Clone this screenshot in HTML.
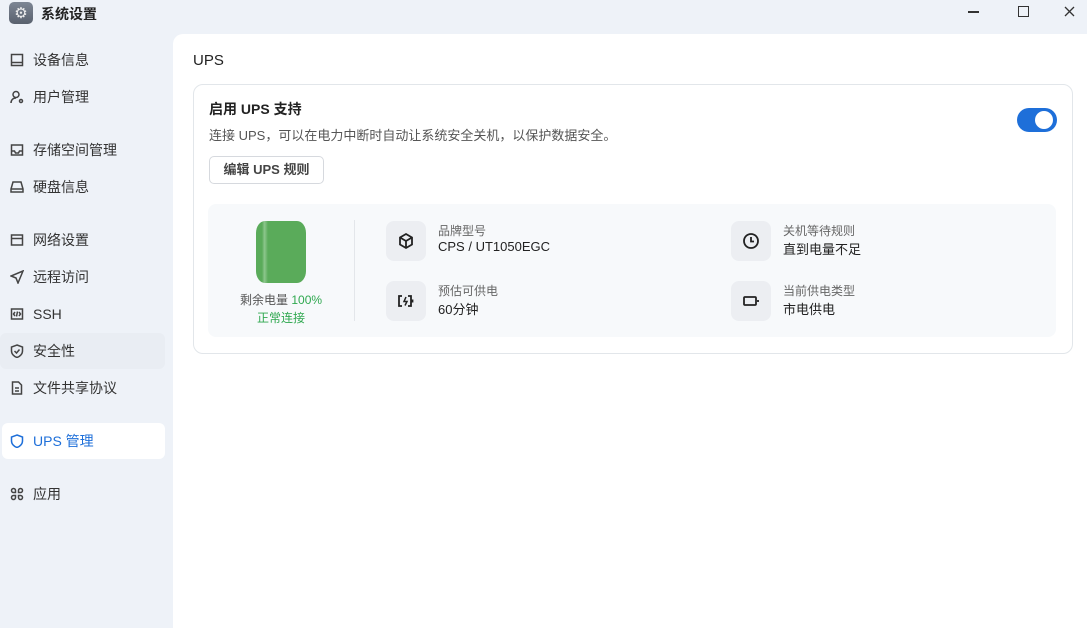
<!DOCTYPE html><html><head><meta charset="utf-8"><style>
*{margin:0;padding:0;box-sizing:border-box}
body{width:1087px;height:628px;overflow:hidden;background:#eef2f8;font-family:"Liberation Sans","Noto Sans CJK SC",sans-serif;position:relative;color:#222}
.a{position:absolute}
.nav{position:absolute;left:10px;font-size:14px;color:#333;display:flex;align-items:center;gap:9px;height:20px}
.nav svg{width:14px;height:14px;fill:none;stroke:#444;stroke-width:1.5}
.ib{position:absolute;width:40px;height:40px;border-radius:8px;background:#eceef2;display:flex;align-items:center;justify-content:center}
.ib svg{width:18px;height:18px;fill:none;stroke:#222;stroke-width:1.8}
.lb{position:absolute;font-size:12px;color:#666}
.vl{position:absolute;font-size:13px;color:#222}
</style></head><body>
<div class="a" style="left:9px;top:2px;width:24px;height:22px;border-radius:5px;background:linear-gradient(#7d8694,#59616e);display:flex;align-items:center;justify-content:center;color:#eee;font-size:15px">⚙</div>
<div class="a" style="left:41px;top:4px;font-size:14px;font-weight:bold;color:#222">系统设置</div>
<div class="a" style="left:968px;top:11px;width:11px;height:1.5px;background:#333"></div>
<div class="a" style="left:1018px;top:6px;width:11px;height:11px;border:1.5px solid #333"></div>
<svg class="a" style="left:1064px;top:6px" width="11" height="11" viewBox="0 0 11 11"><path d="M1 1l9 9M10 1l-9 9" stroke="#333" stroke-width="1.3"/></svg>

<div class="a" style="left:0;top:333px;width:165px;height:36px;background:#e9edf3;border-radius:6px"></div>
<div class="a" style="left:2px;top:423px;width:163px;height:36px;background:#fff;border-radius:6px"></div>

<div class="nav" style="top:50px"><svg viewBox="0 0 14 14"><rect x="1.5" y="1.5" width="11" height="11"/><path d="M1.5 9.5h11"/></svg>设备信息</div>
<div class="nav" style="top:87px"><svg viewBox="0 0 14 14"><circle cx="6" cy="4.5" r="3"/><path d="M1 13c0-3 2-5 5-5"/><circle cx="11" cy="11" r="1.5"/></svg>用户管理</div>
<div class="nav" style="top:140px"><svg viewBox="0 0 14 14"><rect x="1.5" y="2" width="11" height="10"/><path d="M1.5 8h3l1 2h3l1-2h3"/></svg>存储空间管理</div>
<div class="nav" style="top:177px"><svg viewBox="0 0 14 14"><path d="M3 2h8l2 7v3H1V9z"/><path d="M1 9h12"/></svg>硬盘信息</div>
<div class="nav" style="top:230px"><svg viewBox="0 0 14 14"><rect x="1.5" y="2" width="11" height="10"/><path d="M1.5 5.5h11"/></svg>网络设置</div>
<div class="nav" style="top:267px"><svg viewBox="0 0 14 14"><path d="M13 1L1 6l5 2 2 5z"/></svg>远程访问</div>
<div class="nav" style="top:304px"><svg viewBox="0 0 14 14"><rect x="1.5" y="2" width="11" height="10"/><path d="M5 5L3.5 7 5 9M9 5l1.5 2L9 9M7.5 4.5l-1 5"/></svg>SSH</div>
<div class="nav" style="top:341px"><svg viewBox="0 0 14 14"><path d="M7 1l5.5 2v4c0 3-2.5 5.5-5.5 6.5C4 12.5 1.5 10 1.5 7V3z"/><path d="M4.5 7l2 2 3-3.5"/></svg>安全性</div>
<div class="nav" style="top:378px"><svg viewBox="0 0 14 14"><path d="M2.5 1h6l3 3v9h-9z"/><path d="M5 7h4M5 10h4"/></svg>文件共享协议</div>
<div class="nav" style="top:431px;color:#1e6fd9"><svg viewBox="0 0 14 14" style="stroke:#1e6fd9"><path d="M7 1l5.5 2v4c0 3-2.5 5.5-5.5 6.5C4 12.5 1.5 10 1.5 7V3z"/></svg>UPS 管理</div>
<div class="nav" style="top:484px"><svg viewBox="0 0 14 14"><path d="M5.5 3.5a2 2 0 1 0-2 2h2zM8.5 3.5a2 2 0 1 1 2 2h-2zM5.5 10.5a2 2 0 1 1-2-2h2zM8.5 10.5a2 2 0 1 0 2-2h-2z"/></svg>应用</div>

<div class="a" style="left:173px;top:34px;width:914px;height:594px;background:#fff;border-top-left-radius:10px"></div>
<div class="a" style="left:193px;top:52px;font-size:15px;color:#222">UPS</div>
<div class="a" style="left:193px;top:84px;width:880px;height:270px;border:1px solid #e2e6ea;border-radius:10px"></div>
<div class="a" style="left:209px;top:99px;font-size:14px;font-weight:bold">启用 UPS 支持</div>
<div class="a" style="left:209px;top:125px;font-size:13px;color:#555">连接 UPS，可以在电力中断时自动让系统安全关机，以保护数据安全。</div>
<div class="a" style="left:209px;top:156px;width:115px;height:28px;border:1px solid #d6d9de;border-radius:5px;font-size:13px;font-weight:bold;color:#444;text-align:center;line-height:26px">编辑 UPS 规则</div>
<div class="a" style="left:1017px;top:108px;width:40px;height:24px;border-radius:12px;background:#1e6fd9"><div class="a" style="left:18px;top:3px;width:18px;height:18px;border-radius:50%;background:#fff"></div></div>

<div class="a" style="left:208px;top:204px;width:848px;height:133px;background:#f7f9fb;border-radius:8px"></div>
<div class="a" style="left:256px;top:221px;width:50px;height:62px;border-radius:9px/12px;background:linear-gradient(90deg,#5aab5a 0,#5aab5a 12%,#8cc68c 17%,#5aab5a 24%,#5aab5a)"></div>
<div class="a" style="left:240px;top:291px;font-size:12px;color:#555">剩余电量 <span style="color:#2fa84f">100%</span></div>
<div class="a" style="left:257px;top:309px;font-size:12px;color:#2fa84f">正常连接</div>
<div class="a" style="left:354px;top:220px;width:1px;height:101px;background:#e3e6ea"></div>

<div class="ib" style="left:386px;top:221px"><svg viewBox="0 0 18 18"><path d="M9 2l6 3.5v7L9 16l-6-3.5v-7z"/><path d="M3 5.5L9 9l6-3.5M9 9v7"/></svg></div>
<div class="lb" style="left:438px;top:222px">品牌型号</div><div class="vl" style="left:438px;top:239px">CPS / UT1050EGC</div>
<div class="ib" style="left:386px;top:281px"><svg viewBox="0 0 18 18"><path d="M5 4H2v10h3M11 4h3v10h-3M15.5 7.5v3"/><path d="M9 5L7 9.5h3L8 13.5" stroke-width="1.5"/></svg></div>
<div class="lb" style="left:438px;top:282px">预估可供电</div><div class="vl" style="left:438px;top:299px">60分钟</div>
<div class="ib" style="left:731px;top:221px"><svg viewBox="0 0 18 18"><circle cx="9" cy="9" r="7"/><path d="M9 5v4.5h3"/></svg></div>
<div class="lb" style="left:783px;top:222px">关机等待规则</div><div class="vl" style="left:783px;top:239px">直到电量不足</div>
<div class="ib" style="left:731px;top:281px"><svg viewBox="0 0 18 18"><rect x="2" y="5" width="12" height="8" rx="1"/><path d="M16 8v2"/></svg></div>
<div class="lb" style="left:783px;top:282px">当前供电类型</div><div class="vl" style="left:783px;top:299px">市电供电</div>
</body></html>
